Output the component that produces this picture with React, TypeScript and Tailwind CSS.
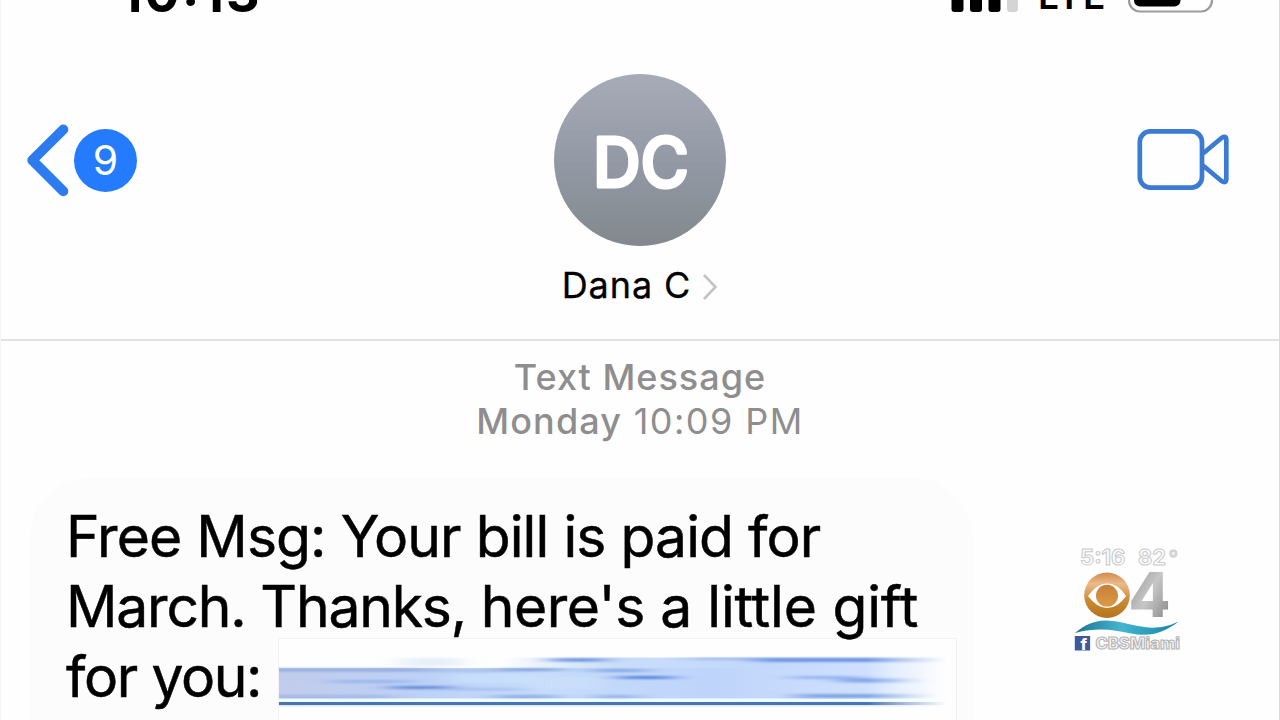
import { ReactNode } from "react";

function StatusBar() {
  return (
    <div className="flex h-[14px] items-end overflow-hidden pl-[119px] pr-[64px]">
      <span className="mb-[-10px] text-[52px] leading-[60px] font-bold tracking-[2.2px]">
        10<span className="relative top-[-6px]">:</span>13
      </span>
      <div className="ml-auto flex items-end">
        <svg className="h-[14px] w-[67px]" viewBox="951 0 67 14">
          <rect x="951.5" y="-30" width="12" height="42" rx="3" fill="#000" />
          <rect x="970" y="-30" width="12" height="42" rx="3" fill="#000" />
          <rect x="988.5" y="-30" width="12" height="42" rx="3" fill="#000" />
          <rect x="1007" y="-30" width="11" height="42" rx="3" fill="#d4d4d4" />
        </svg>
        <span className="mb-[-4px] ml-[20px] text-[37px] leading-[44px] font-semibold tracking-[1.6px]">LTE</span>
        <svg className="ml-[20px] h-[14px] w-[88px]" viewBox="1127 0 88 14">
          <rect x="1129" y="-30" width="83" height="41.5" rx="11" fill="none" stroke="#9c9c9c" strokeWidth="2.2" />
          <rect x="1134" y="-30" width="46.5" height="36.4" rx="6" fill="#000" />
        </svg>
      </div>
    </div>
  );
}

function BackButton() {
  return (
    <button className="flex items-center gap-[5px]">
      <svg className="h-[74px] w-[44px]" viewBox="25 123 44 74" fill="none">
        <path
          d="M63.3 129.5 L32.3 160.3 L63.3 191.3"
          stroke="#2c7cf0"
          strokeWidth="10"
          strokeLinecap="round"
          strokeLinejoin="round"
        />
      </svg>
      <span className="flex size-[63px] items-center justify-center rounded-full bg-[#257bfd] pt-[2px] text-[41px] font-normal text-white">
        9
      </span>
    </button>
  );
}

function Avatar() {
  return (
    <svg className="size-[172px]" viewBox="554 74 172 172">
      <defs>
        <linearGradient id="avatar" x1="0" y1="0" x2="0" y2="1">
          <stop offset="0" stopColor="#a6abb7" />
          <stop offset="0.55" stopColor="#9298a3" />
          <stop offset="1" stopColor="#82888d" />
        </linearGradient>
      </defs>
      <circle cx="640" cy="160" r="86" fill="url(#avatar)" />
      <text
        x="593"
        y="187.3"
        textLength="96"
        lengthAdjust="spacingAndGlyphs"
        fontSize="69"
        fontWeight="500"
        fill="#fff"
        stroke="#fff"
        strokeWidth="3.2"
        strokeLinejoin="round"
      >
        DC
      </text>
    </svg>
  );
}

function VideoIcon() {
  return (
    <svg className="h-[64px] w-[94px]" viewBox="1136 128 94 64" fill="none">
      <g stroke="#3b7bd3" strokeWidth="4.7" strokeLinejoin="round">
        <rect x="1139.8" y="131.4" width="62.2" height="56.2" rx="10.5" />
        <path d="M1203 153.5 L1221.5 138 Q1226.3 135 1226.3 140 V178.5 Q1226.3 184 1221.5 181 L1203 165.5" />
      </g>
    </svg>
  );
}

function Line({ className, children }: { className?: string; children: ReactNode }) {
  return <div className={`whitespace-nowrap ${className ?? ""}`}>{children}</div>;
}

// Smeared-out link
function RedactedLink() {
  return (
    <svg className="h-[84px] w-[680px]" viewBox="277 637 680 84">
      <defs>
        <linearGradient id="fadeGrad" x1="0" y1="0" x2="1" y2="0">
          <stop offset="0" stopColor="#fff" />
          <stop offset="0.88" stopColor="#fff" />
          <stop offset="0.94" stopColor="#fff" stopOpacity="0.45" />
          <stop offset="1" stopColor="#fff" stopOpacity="0" />
        </linearGradient>
        <mask id="fade" maskUnits="userSpaceOnUse" x="278" y="640" width="668" height="80">
          <rect x="278" y="640" width="668" height="80" fill="url(#fadeGrad)" />
        </mask>
        <linearGradient id="band" x1="0" y1="0" x2="1" y2="0">
          <stop offset="0" stopColor="#c2ccec" />
          <stop offset="0.2" stopColor="#bdd0f5" />
          <stop offset="0.4" stopColor="#c6dcfa" />
          <stop offset="0.65" stopColor="#bed4fa" />
          <stop offset="0.85" stopColor="#cddffd" />
          <stop offset="1" stopColor="#d9e8ff" />
        </linearGradient>
        <linearGradient id="top" x1="0" y1="0" x2="1" y2="0">
          <stop offset="0" stopColor="#c4daf8" stopOpacity="0" />
          <stop offset="0.25" stopColor="#c9ddfa" />
          <stop offset="0.6" stopColor="#c3d7fb" />
          <stop offset="1" stopColor="#d9e8ff" />
        </linearGradient>
        <filter id="soft" x="-20%" y="-200%" width="140%" height="500%" colorInterpolationFilters="sRGB">
          <feGaussianBlur stdDeviation="13 1.1" />
        </filter>
      </defs>
      <rect x="277.5" y="637.5" width="678" height="90" fill="#fefefe" stroke="#f2f2f2" />
      <g mask="url(#fade)">
        <rect x="500" y="656.5" width="446" height="13" fill="url(#top)" />
        <rect x="278" y="667" width="668" height="30.5" fill="url(#band)" />
        <g filter="url(#soft)">
          <rect x="400" y="657" width="60" height="8" fill="#dce8f8" opacity="0.7" />
          <rect x="250" y="667.5" width="180" height="3" fill="#90abde" />
          <rect x="430" y="668" width="80" height="3" fill="#9db8e8" opacity="0.6" />
          <rect x="500" y="667.5" width="60" height="2.5" fill="#7b9cda" />
          <rect x="550" y="657.5" width="54" height="3" fill="#6088da" />
          <rect x="590" y="668" width="55" height="3" fill="#84a6e4" />
          <rect x="330" y="679" width="80" height="3" fill="#98b6ee" />
          <rect x="390" y="685" width="60" height="3" fill="#6088da" />
          <rect x="440" y="687" width="80" height="2.5" fill="#a3c0f2" />
          <rect x="618" y="675" width="54" height="3" fill="#5482da" />
          <rect x="690" y="657" width="80" height="2" fill="#9cb9ee" />
          <rect x="755" y="657" width="210" height="4" fill="#6f96e4" />
          <rect x="790" y="675" width="70" height="3" fill="#95b5f0" />
          <rect x="838" y="677.5" width="75" height="4" fill="#7ea3ea" />
          <rect x="795" y="693" width="130" height="4" fill="#84a5e3" />
          <rect x="250" y="694" width="140" height="3" fill="#93acdf" opacity="0.7" />
          <rect x="495" y="694" width="60" height="3" fill="#8cabe4" />
          <rect x="595" y="694" width="40" height="3" fill="#90aeea" />
          <rect x="450" y="673" width="90" height="9" fill="#cbe2fc" opacity="0.7" />
          <rect x="530" y="676" width="70" height="12" fill="#cbdffb" opacity="0.8" />
        </g>
        <rect x="278" y="698" width="668" height="3" fill="#eefcff" />
        <rect x="278" y="701" width="668" height="3" fill="#4873b4" />
        <rect x="278" y="704" width="668" height="1.5" fill="#dbe7fa" />
      </g>
    </svg>
  );
}

function StationBug() {
  return (
    <svg className="absolute left-[1069px] top-[540px] h-[116px] w-[116px]" viewBox="1070 540 116 116">
      <defs>
        <linearGradient id="eye" x1="0" y1="0" x2="0" y2="1">
          <stop offset="0" stopColor="#d08a48" />
          <stop offset="0.25" stopColor="#ecbb8a" />
          <stop offset="0.6" stopColor="#cd8a35" />
          <stop offset="1" stopColor="#b5731e" />
        </linearGradient>
        <linearGradient id="pupil" x1="0" y1="0" x2="0" y2="1">
          <stop offset="0" stopColor="#c77f38" />
          <stop offset="1" stopColor="#d99c48" />
        </linearGradient>
        <linearGradient id="four" x1="0" y1="0" x2="1" y2="1">
          <stop offset="0" stopColor="#8b8b8b" />
          <stop offset="0.5" stopColor="#c6c6c6" />
          <stop offset="1" stopColor="#777" />
        </linearGradient>
        <linearGradient id="wave" x1="0" y1="0" x2="1" y2="0">
          <stop offset="0" stopColor="#1b7396" />
          <stop offset="0.45" stopColor="#45b5d0" />
          <stop offset="1" stopColor="#1682a5" />
        </linearGradient>
      </defs>
      <g fill="#fbfbfb" stroke="#cacaca" strokeWidth="1" fontWeight="700">
        <text x="1080" y="565" fontSize="21.5" textLength="45.5" lengthAdjust="spacingAndGlyphs">5:16</text>
        <text x="1138" y="565" fontSize="21.5" textLength="28" lengthAdjust="spacingAndGlyphs">82</text>
        <text x="1168.5" y="565.5" fontSize="21" fontWeight="400">°</text>
      </g>
      <circle cx="1107" cy="595.2" r="22.8" fill="url(#eye)" />
      <path d="M1088 596 Q1097 583.5 1107 583.5 Q1118 583.5 1126 596 Q1118 608 1107 608 Q1097 608 1088 596Z" fill="#fff" />
      <circle cx="1107" cy="595.7" r="11" fill="url(#pupil)" />
      <text
        x="1128.5"
        y="617.3"
        fontSize="62.5"
        fontWeight="800"
        textLength="42"
        lengthAdjust="spacingAndGlyphs"
        fill="url(#four)"
      >
        4
      </text>
      <path
        d="M1075 633 C1085 624 1098 618.5 1113 621 C1135 624 1153 634 1178.5 621.5 C1165 632 1151 637.5 1131 633.5 C1113 630 1099 627 1075 633Z"
        fill="url(#wave)"
      />
      <rect x="1074.8" y="636" width="15.3" height="14.5" fill="#41599a" />
      <text x="1080.5" y="650" fontSize="16" fontWeight="800" fill="#fff">f</text>
      <text
        x="1095.5"
        y="648.8"
        fontSize="15.5"
        fontWeight="800"
        textLength="84.5"
        lengthAdjust="spacingAndGlyphs"
        fill="#f2f2f2"
        stroke="#b4b4b4"
        strokeWidth="1"
      >
        CBSMiami
      </text>
    </svg>
  );
}

export default function App() {
  return (
    <div className="relative flex h-[720px] w-[1280px] flex-col overflow-hidden border-l border-r border-l-[#f5f5f5] border-r-[#d9d9df] bg-[#fefefe] font-['Inter',sans-serif] text-black">
      <header className="h-[341px] shrink-0 border-b-2 border-[#e2e2e2]">
        <StatusBar />
        <div className="grid h-[292px] grid-cols-[1fr_auto_1fr] items-start pt-[60px] pl-[24px] pr-[49px]">
          <div className="pt-[49px]">
            <BackButton />
          </div>
          <div className="ml-[25px] flex flex-col items-center">
            <Avatar />
            <div className="mt-[16px] flex items-center gap-[11px] text-[36px] leading-[46px]">
              <Line className="tracking-[0.9px] [-webkit-text-stroke:0.3px]">Dana C</Line>
              <svg className="mt-[3px] h-[28px] w-[16px]" viewBox="0 0 16 28" fill="none">
                <path d="M2 2 L13.5 14 L2 26" stroke="#c3c3c5" strokeWidth="2.6" />
              </svg>
            </div>
          </div>
          <div className="flex justify-end pt-[54px]">
            <VideoIcon />
          </div>
        </div>
      </header>

      <main className="flex flex-1 flex-col">
        <div className="flex flex-col items-center pt-[14px] text-[36px] leading-[44px] text-[#8e8e8f]">
          <Line className="font-medium tracking-[1px]">Text Message</Line>
          <Line className="tracking-[1.45px]">
            <span className="font-medium tracking-[1.15px]">Monday</span> 10:09 PM
          </Line>
        </div>
        <section className="mt-[35px] ml-[29px] h-[300px] w-[943px] rounded-[60px] bg-[#fcfcfc] pt-[24px] pl-[36px] text-[57px] leading-[70px] [-webkit-text-stroke:0.5px]">
          <Line className="tracking-[-0.93px]">Free Msg: Your bill is paid for</Line>
          <Line className="relative z-10 tracking-[-1.2px]">
            March. Thanks, <span className="tracking-[-0.5px]">here's a </span>
            <span className="tracking-[-0.2px]">little gift</span>
          </Line>
          <div className="flex">
            <Line className="w-[212px] tracking-[-1.4px]">for you:</Line>
            <div className="mt-[-4px]">
              <RedactedLink />
            </div>
          </div>
        </section>
      </main>

      <StationBug />
    </div>
  );
}
